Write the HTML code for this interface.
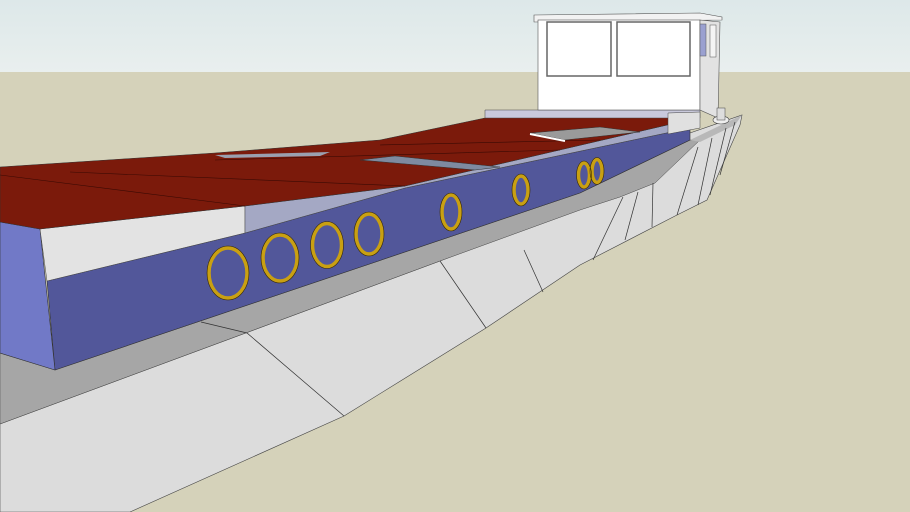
<!DOCTYPE html>
<html><head><meta charset="utf-8"><style>html,body{margin:0;padding:0;width:910px;height:512px;overflow:hidden}</style></head>
<body>
<svg width="910" height="512" viewBox="0 0 910 512" xmlns="http://www.w3.org/2000/svg">
<defs><linearGradient id="sky" x1="0" y1="0" x2="0" y2="1"><stop offset="0" stop-color="#dde8e9"/><stop offset="1" stop-color="#e9efee"/></linearGradient></defs>
<rect x="0" y="0" width="910" height="72" fill="url(#sky)"/>
<rect x="0" y="72" width="910" height="440" fill="#d5d2ba"/>
<!-- lower hull incl. bow -->
<polygon points="0,424 440,261 580,205 690,133 742,115 740,125 707,200 677,215 580,265 486,328 344,416 130,512 0,512" fill="#dcdcdc" stroke="#444" stroke-width="0.6"/>
<!-- ledge -->
<polygon points="0,353 55,370 580,193 690,140 700,140 655,183 620,197 580,210 440,261 0,424" fill="#a6a6a6" stroke="#444" stroke-width="0.5"/>
<polygon points="690,140 742,115 735,125 700,142" fill="#b8b8b8"/>
<g stroke="#333" stroke-width="0.7" fill="none">
<polyline points="201,322 247,333 344,416"/>
<line x1="440" y1="261" x2="486" y2="328"/>
<line x1="524" y1="250" x2="543" y2="292"/>
<line x1="623" y1="197" x2="593" y2="260"/>
<line x1="638" y1="192" x2="625" y2="240"/>
<line x1="653" y1="183" x2="652" y2="227"/>
<line x1="698" y1="147" x2="677" y2="215"/>
<line x1="712" y1="138" x2="698" y2="205"/>
<line x1="726" y1="128" x2="710" y2="195"/>
<line x1="735" y1="122" x2="720" y2="175"/>
</g>
<!-- blue side -->
<polygon points="47,281 245,233 405,188 690,128 690,140 580,193 55,370" fill="#52579a" stroke="#333" stroke-width="0.6"/>
<!-- left end face -->
<polygon points="0,222 40,229 55,370 0,353" fill="#7179c7" stroke="#333" stroke-width="0.6"/>
<!-- white face -->
<polygon points="40,229 245,206 245,233 47,281" fill="#e3e3e3" stroke="#444" stroke-width="0.5"/>
<!-- lavender gunwale -->
<polygon points="245,206 405,186 680,122 690,128 405,188 245,233" fill="#a4a8c4" stroke="#444" stroke-width="0.5"/>
<!-- red deck -->
<polygon points="0,167 215,153 380,140 485,118 672,112 690,122 680,122 405,186 245,206 40,229 0,222" fill="#7b1a0b" stroke="#333" stroke-width="0.5"/>
<g stroke="#3a0a04" stroke-width="0.6" fill="none">
<line x1="0" y1="175" x2="245" y2="206"/>
<line x1="70" y1="172" x2="405" y2="186"/>
<line x1="215" y1="160" x2="560" y2="150"/>
<line x1="380" y1="145" x2="600" y2="140"/>
</g>
<!-- hatches -->
<polygon points="360,160 475,170 500,167 395,156" fill="#7e8aa0" stroke="#333" stroke-width="0.5"/>
<polygon points="215,155 330,152 320,156 225,158" fill="#9aa0b0"/>
<polygon points="530,133 600,127 640,132 565,140" fill="#9a9a9a" stroke="#333" stroke-width="0.5"/>
<line x1="530" y1="134" x2="565" y2="141" stroke="#fff" stroke-width="2"/>
<!-- raised step -->
<polygon points="485,110 700,110 700,118 485,118" fill="#c9c9dc" stroke="#444" stroke-width="0.5"/>
<polygon points="668,113 700,112 700,128 668,134" fill="#e0e0e0" stroke="#444" stroke-width="0.5"/>
<!-- cabin -->
<polygon points="534,15 700,13 722,17 722,20 534,22" fill="#f2f2f2" stroke="#555" stroke-width="0.6"/>
<rect x="538" y="20" width="162" height="90" fill="#ffffff" stroke="#555" stroke-width="0.6"/>
<polygon points="700,20 720,22 718,118 700,110" fill="#e2e2e2" stroke="#555" stroke-width="0.6"/>
<rect x="547" y="22" width="64" height="54" fill="#fff" stroke="#666" stroke-width="1.5"/>
<rect x="617" y="22" width="73" height="54" fill="#fff" stroke="#666" stroke-width="1.5"/>
<rect x="700" y="24" width="6" height="32" fill="#9aa0d0" stroke="#555" stroke-width="0.5"/>
<rect x="710" y="25" width="6" height="32" fill="#f4f4f4" stroke="#555" stroke-width="0.5"/>
<!-- bollard -->
<ellipse cx="721" cy="120" rx="8" ry="4" fill="#eee" stroke="#444" stroke-width="0.6"/>
<rect x="717" y="108" width="8" height="12" fill="#ddd" stroke="#444" stroke-width="0.5"/>
<!-- portholes -->
<g fill="none" stroke="#c9a012" stroke-width="3.5">
<ellipse cx="228" cy="273" rx="19" ry="25"/>
<ellipse cx="280" cy="258" rx="17" ry="23"/>
<ellipse cx="327" cy="245" rx="14.5" ry="21.5"/>
<ellipse cx="369" cy="234" rx="13" ry="20"/>
<ellipse cx="451" cy="212" rx="9" ry="17"/>
<ellipse cx="521" cy="190" rx="7" ry="14"/>
<ellipse cx="584" cy="175" rx="5.5" ry="12"/>
<ellipse cx="597" cy="171" rx="5" ry="11.5"/>
</g>
<g fill="none" stroke="#3a2a00" stroke-width="0.6">
<ellipse cx="228" cy="273" rx="21" ry="27"/>
<ellipse cx="280" cy="258" rx="19" ry="25"/>
<ellipse cx="327" cy="245" rx="16.5" ry="23.5"/>
<ellipse cx="369" cy="234" rx="15" ry="22"/>
<ellipse cx="451" cy="212" rx="11" ry="19"/>
<ellipse cx="521" cy="190" rx="9" ry="16"/>
<ellipse cx="584" cy="175" rx="7.5" ry="14"/>
<ellipse cx="597" cy="171" rx="7" ry="13.5"/>
</g>
</svg>
</body></html>
